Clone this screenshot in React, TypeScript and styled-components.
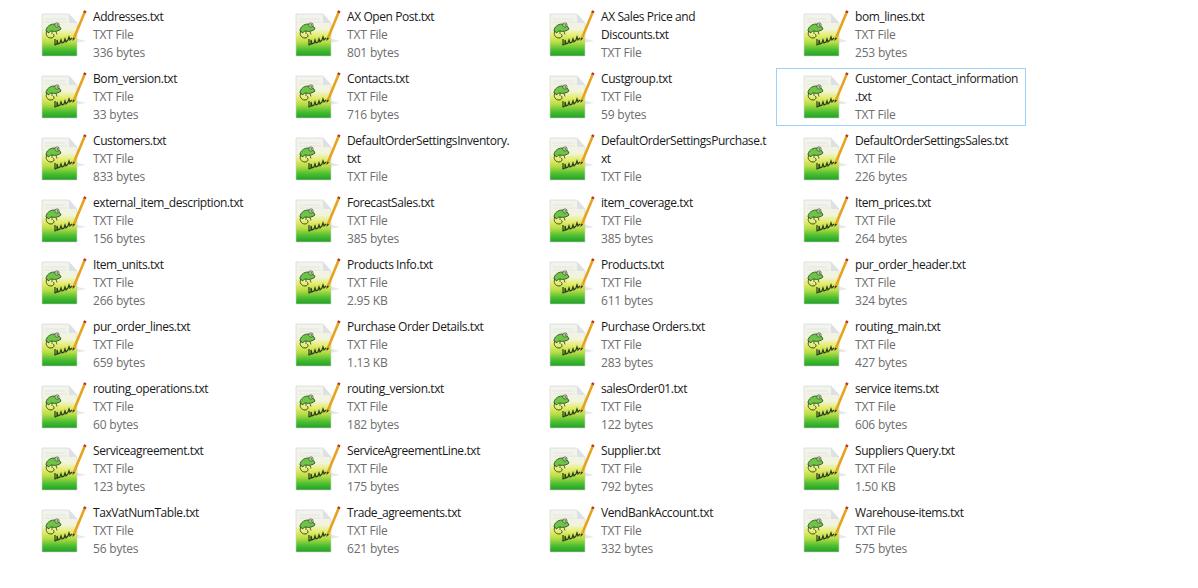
import * as React from "react";
import styled, { createGlobalStyle } from "styled-components";

const GlobalStyle = createGlobalStyle`
    html, body {
        margin: 0;
        padding: 0;
        background: #fff;
        overflow: hidden;
    }
`;

type FileEntry = { name: string; size?: string; selected?: boolean };

const files: FileEntry[] = [
    { name: "Addresses.txt", size: "336 bytes" },
    { name: "AX Open Post.txt", size: "801 bytes" },
    { name: "AX Sales Price and\nDiscounts.txt" },
    { name: "bom_lines.txt", size: "253 bytes" },
    { name: "Bom_version.txt", size: "33 bytes" },
    { name: "Contacts.txt", size: "716 bytes" },
    { name: "Custgroup.txt", size: "59 bytes" },
    { name: "Customer_Contact_information\n.txt", selected: true },
    { name: "Customers.txt", size: "833 bytes" },
    { name: "DefaultOrderSettingsInventory.\ntxt" },
    { name: "DefaultOrderSettingsPurchase.t\nxt" },
    { name: "DefaultOrderSettingsSales.txt", size: "226 bytes" },
    { name: "external_item_description.txt", size: "156 bytes" },
    { name: "ForecastSales.txt", size: "385 bytes" },
    { name: "item_coverage.txt", size: "385 bytes" },
    { name: "Item_prices.txt", size: "264 bytes" },
    { name: "Item_units.txt", size: "266 bytes" },
    { name: "Products Info.txt", size: "2.95 KB" },
    { name: "Products.txt", size: "611 bytes" },
    { name: "pur_order_header.txt", size: "324 bytes" },
    { name: "pur_order_lines.txt", size: "659 bytes" },
    { name: "Purchase Order Details.txt", size: "1.13 KB" },
    { name: "Purchase Orders.txt", size: "283 bytes" },
    { name: "routing_main.txt", size: "427 bytes" },
    { name: "routing_operations.txt", size: "60 bytes" },
    { name: "routing_version.txt", size: "182 bytes" },
    { name: "salesOrder01.txt", size: "122 bytes" },
    { name: "service items.txt", size: "606 bytes" },
    { name: "Serviceagreement.txt", size: "123 bytes" },
    { name: "ServiceAgreementLine.txt", size: "175 bytes" },
    { name: "Supplier.txt", size: "792 bytes" },
    { name: "Suppliers Query.txt", size: "1.50 KB" },
    { name: "TaxVatNumTable.txt", size: "56 bytes" },
    { name: "Trade_agreements.txt", size: "621 bytes" },
    { name: "VendBankAccount.txt", size: "332 bytes" },
    { name: "Warehouse-items.txt", size: "575 bytes" },
];

const Page = styled.div`
    display: grid;
    grid-template-columns: repeat(4, 250px);
    grid-auto-rows: 58px;
    column-gap: 4px;
    row-gap: 4px;
    padding: 6px 0 0 14px;
    font-family: "Open Sans", "Liberation Sans", sans-serif;
    font-size: 12px;
    line-height: 18px;
`;

const Item = styled.div<{ $selected?: boolean }>`
    display: flex;
    box-sizing: border-box;
    border: 1px solid ${({ $selected }) => ($selected ? "#99d1ff" : "transparent")};
    padding-left: 25px;
`;

const IconBox = styled.div`
    flex: none;
    width: 53px;
    padding-top: 3px;
`;

const Details = styled.div`
    min-width: 0;
    padding-top: 1px;
`;

const Name = styled.div`
    color: #1a1a1a;
    white-space: pre-line;
    letter-spacing: -0.42px;
`;

const Meta = styled.div`
    color: #6d6d6d;
    letter-spacing: -0.2px;
`;

function NotepadIcon(props: React.SVGProps<SVGSVGElement>) {
    return (
        <svg width="48" height="48" viewBox="0 0 48 48" fill="none" {...props}>
            <defs>
                <linearGradient id="pageFill" x1="0" y1="0" x2="0" y2="1">
                    <stop offset="0" stopColor="#f1f3f1" />
                    <stop offset="0.36" stopColor="#f2f4dc" />
                    <stop offset="0.52" stopColor="#e6ec6a" />
                    <stop offset="0.68" stopColor="#b4dc44" />
                    <stop offset="0.86" stopColor="#47bd30" />
                    <stop offset="1" stopColor="#239f28" />
                </linearGradient>
            </defs>
            <path d="M35 33l11-2-11-3z" fill="#e8e8e8" />
            <path d="M2 4h27l8 9v33H2z" fill="url(#pageFill)" stroke="#d2d5ce" strokeWidth={0.6} />
            <path d="M29 4v9h8z" fill="#dde0e4" />
            <path d="M5 9h20M5 12h22" stroke="#dfe2de" strokeWidth={0.8} />
            <path
                d="M6 21c0-4 4-7 8-7 3 0 6 2 7 5-2 2-6 3-9 2-2 0-3 1-3 2z"
                fill="#6cc544"
                stroke="#27421b"
                strokeWidth={0.8}
            />
            <circle cx="17" cy="15" r="2.1" fill="#e8f3d0" stroke="#27421b" strokeWidth={0.7} />
            <circle cx="17.2" cy="15" r="0.7" fill="#111" />
            <path d="M7 21c-2 3 0 7 4 7 3 0 4-3 2-4" stroke="#27421b" strokeWidth={0.9} />
            <path d="M12 21v3M16 21.500l1 3" stroke="#27421b" strokeWidth={0.8} />
            <path
                d="M15 29v6.500M15 35l2-1v-4l1 4 2-1 1-3 1 3 2-1 1-3 1 3 2-2 1-3 1 3 2-2"
                stroke="#2a3a1c"
                strokeWidth={1.2}
            />
            <path d="M45 1.500L34 28" stroke="#e6a31f" strokeWidth={2.6} />
            <path d="M45.300 0.800l-.8 2" stroke="#b8322a" strokeWidth={2.6} />
            <path d="M32.900 27.500l2.300 1-2.800 2.500z" fill="#4a3618" />
        </svg>
    );
}

function FileItem({ name, size, selected }: FileEntry) {
    return (
        <Item $selected={selected}>
            <IconBox>
                <NotepadIcon />
            </IconBox>
            <Details>
                <Name>{name}</Name>
                <Meta>TXT File</Meta>
                {size && <Meta>{size}</Meta>}
            </Details>
        </Item>
    );
}

export default function App() {
    return (
        <>
            <GlobalStyle />
            <Page>
                {files.map((file) => (
                    <FileItem key={file.name} {...file} />
                ))}
            </Page>
        </>
    );
}
